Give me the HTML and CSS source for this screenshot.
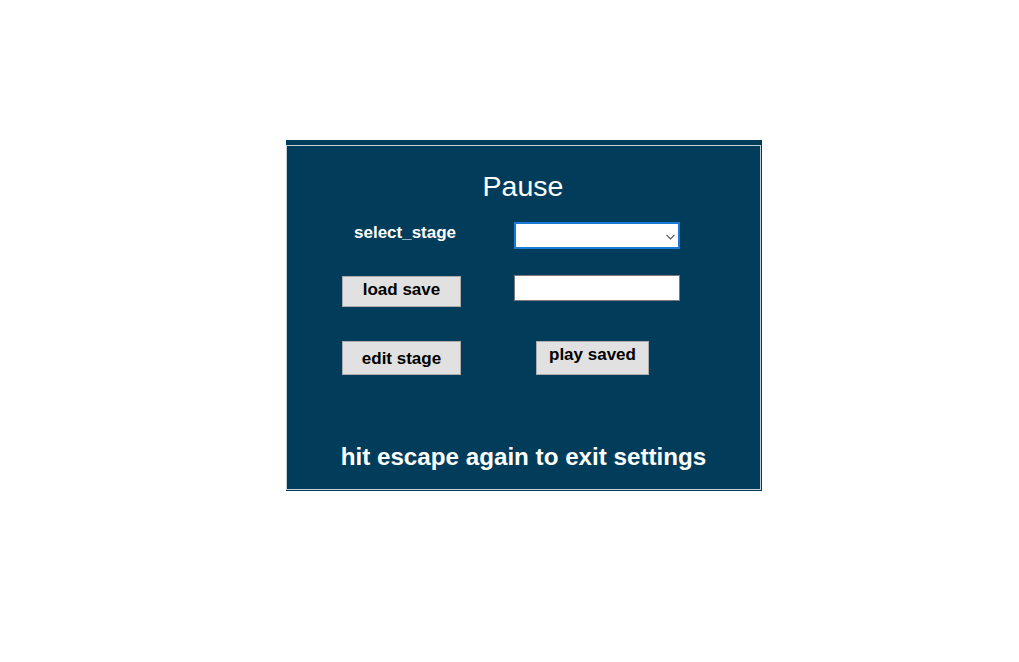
FILE: index.html
```html
<!DOCTYPE html>
<html>
<head>
<meta charset="utf-8">
<link rel="stylesheet" href="styles.css">
</head>
<body>
<div class="frame">
  <div class="panel">
    <h1 class="title">Pause</h1>
    <div class="grid">
      <div class="label">select_stage</div>
      <div class="select">
        <svg class="chev" width="9" height="6" viewBox="0 0 9 6"><path d="M0.5 0.8 L4.5 4.8 L8.5 0.8" fill="none" stroke="#555" stroke-width="1.2"/></svg>
      </div>
      <button class="btn btn-load">load save</button>
      <div class="input"></div>
      <button class="btn btn-edit">edit stage</button>
      <button class="btn btn-play">play saved</button>
    </div>
    <p class="footer">hit escape again to exit settings</p>
  </div>
</div>
</body>
</html>
```

FILE: styles.css
```css
html, body {
  margin: 0;
  padding: 0;
  background: #ffffff;
}
.frame {
  width: 475px;
  margin: 140px 0 0 286px;
  padding: 5px 1px 1px 0;
  background: #013d5b;
}
.panel {
  border: 1px solid #c3d0d8;
  background: #013d5b;
  padding: 24px 0 18px 0;
  font-family: "Liberation Sans", Arial, sans-serif;
  color: #ffffff;
}
.title {
  margin: 0;
  font-size: 28.5px;
  line-height: 32px;
  font-weight: normal;
  text-align: center;
  padding-right: 1px;
}
.grid {
  display: grid;
  grid-template-columns: 119px 166px;
  column-gap: 53px;
  margin: 20px 0 0 55px;
}
.label {
  font-size: 17px;
  line-height: 20px;
  font-weight: bold;
  margin-left: 12px;
  margin-top: 1px;
  align-self: start;
}
.select {
  box-sizing: border-box;
  height: 27px;
  background: #fff;
  border: 2px solid #1a7bd6;
  display: flex;
  align-items: center;
  justify-content: flex-end;
  padding-right: 3px;
}
.chev {
  display: block;
  margin-top: 3px;
}
.btn {
  box-sizing: border-box;
  background: #e1e1e1;
  border: 1px solid #adadad;
  font-family: "Liberation Sans", Arial, sans-serif;
  font-weight: bold;
  font-size: 17px;
  color: #000;
  padding: 0;
  margin: 0;
}
.btn-load {
  height: 31px;
  margin-top: 27px;
  padding-bottom: 3px;
}
.input {
  box-sizing: border-box;
  height: 26px;
  margin-top: 26px;
  background: #fff;
  border: 1px solid #7a7a7a;
}
.btn-edit {
  height: 34px;
  margin-top: 34px;
  padding-top: 2px;
}
.btn-play {
  width: 113px;
  height: 34px;
  margin-top: 34px;
  margin-left: 22px;
  padding-bottom: 7px;
}
.footer {
  margin: 68px 0 0 0;
  font-size: 24.2px;
  line-height: 28px;
  font-weight: bold;
  text-align: center;
}
```
